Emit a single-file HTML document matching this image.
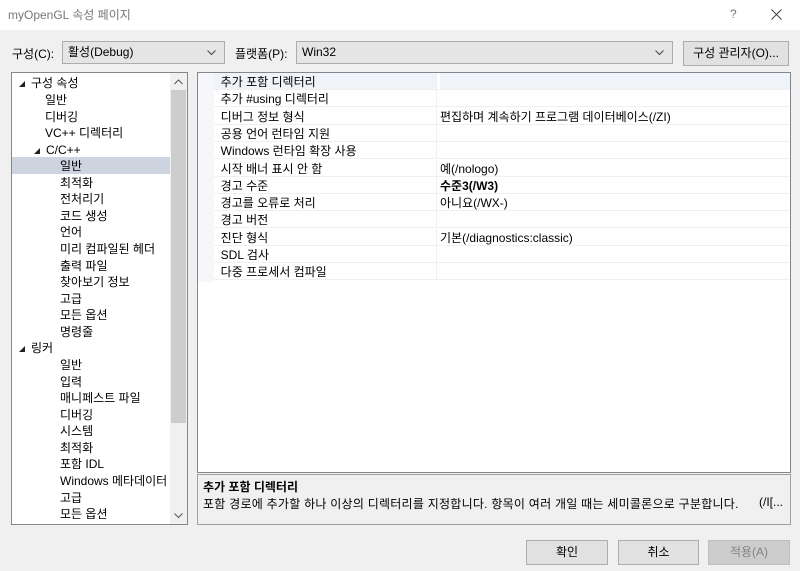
<!DOCTYPE html>
<html><head><meta charset="utf-8"><style>
*{box-sizing:border-box;margin:0;padding:0}
body{width:800px;height:571px;background:#f0f0f0;font-family:"Liberation Sans","Noto Sans CJK KR",sans-serif;font-size:12px;color:#000;position:relative;overflow:hidden}
.a{position:absolute;white-space:nowrap}
.combo{position:absolute;background:#e5e5e5;border:1px solid #adadad;height:23px;line-height:21px;padding-left:5px}
.combo svg{position:absolute;right:8px;top:8px}
.btn{position:absolute;background:#e1e1e1;border:1px solid #adadad;height:25px;line-height:23px;text-align:center}
.tr{position:absolute;left:0;height:17px;line-height:18px;width:158px}
.tri{display:inline-block;width:0;height:0;border-left:6px solid transparent;border-bottom:6px solid #222;margin-right:6px;vertical-align:0}
.gr{position:absolute;left:16px;right:0;height:17px;line-height:19px;border-bottom:1px solid #f0f0f0;overflow:hidden}
.gr span{position:absolute;left:222px;padding-left:3px;border-left:1px solid #f0f0f0;height:17px}
</style></head><body>
<div class="a" style="left:0;top:0;width:800px;height:30px;background:#fff"></div>
<div class="a" style="left:8px;top:6px;font-size:12px;color:#777">myOpenGL 속성 페이지</div>
<div class="a" style="left:730px;top:7px;color:#777">?</div>
<svg class="a" style="left:771px;top:9px" width="11" height="11"><path d="M0.5 0.5L10.5 10.5M10.5 0.5L0.5 10.5" stroke="#444" stroke-width="1"/></svg>

<div class="a" style="left:12px;top:45px">구성(C):</div>
<div class="combo" style="left:62px;top:41px;width:163px">활성(Debug)<svg width="9" height="6"><path d="M0.5 0.5L4.5 4.5L8.5 0.5" stroke="#444" fill="none"/></svg></div>
<div class="a" style="left:235px;top:45px">플랫폼(P):</div>
<div class="combo" style="left:296px;top:41px;width:377px">Win32<svg width="9" height="6"><path d="M0.5 0.5L4.5 4.5L8.5 0.5" stroke="#444" fill="none"/></svg></div>
<div class="btn" style="left:683px;top:41px;width:106px">구성 관리자(O)...</div>

<div class="a" style="left:11px;top:72px;width:177px;height:453px;background:#fff;border:1px solid #828790">
 <div class="a" style="left:158px;top:0;width:17px;height:451px;background:#f0f0f0"></div>
 <div class="a" style="left:159px;top:17px;width:15px;height:333px;background:#cdcdcd"></div>
 <svg class="a" style="left:162px;top:6px" width="9" height="6"><path d="M0.5 5L4.5 1L8.5 5" stroke="#555" fill="none"/></svg>
 <svg class="a" style="left:162px;top:440px" width="9" height="6"><path d="M0.5 0.5L4.5 4.5L8.5 0.5" stroke="#555" fill="none"/></svg>
 <div class="tr" style="top:1px;padding-left:7px"><i class="tri"></i>구성 속성</div>
 <div class="tr" style="top:18px;padding-left:33px">일반</div>
 <div class="tr" style="top:35px;padding-left:33px">디버깅</div>
 <div class="tr" style="top:51px;padding-left:33px">VC++ 디렉터리</div>
 <div class="tr" style="top:68px;padding-left:22px"><i class="tri"></i>C/C++</div>
 <div class="tr" style="top:84px;padding-left:48px;background:#cdd3df">일반</div>
 <div class="tr" style="top:101px;padding-left:48px">최적화</div>
 <div class="tr" style="top:117px;padding-left:48px">전처리기</div>
 <div class="tr" style="top:134px;padding-left:48px">코드 생성</div>
 <div class="tr" style="top:150px;padding-left:48px">언어</div>
 <div class="tr" style="top:167px;padding-left:48px">미리 컴파일된 헤더</div>
 <div class="tr" style="top:184px;padding-left:48px">출력 파일</div>
 <div class="tr" style="top:200px;padding-left:48px">찾아보기 정보</div>
 <div class="tr" style="top:217px;padding-left:48px">고급</div>
 <div class="tr" style="top:233px;padding-left:48px">모든 옵션</div>
 <div class="tr" style="top:250px;padding-left:48px">명령줄</div>
 <div class="tr" style="top:266px;padding-left:7px"><i class="tri"></i>링커</div>
 <div class="tr" style="top:283px;padding-left:48px">일반</div>
 <div class="tr" style="top:300px;padding-left:48px">입력</div>
 <div class="tr" style="top:316px;padding-left:48px">매니페스트 파일</div>
 <div class="tr" style="top:333px;padding-left:48px">디버깅</div>
 <div class="tr" style="top:349px;padding-left:48px">시스템</div>
 <div class="tr" style="top:366px;padding-left:48px">최적화</div>
 <div class="tr" style="top:382px;padding-left:48px">포함 IDL</div>
 <div class="tr" style="top:399px;padding-left:48px">Windows 메타데이터</div>
 <div class="tr" style="top:416px;padding-left:48px">고급</div>
 <div class="tr" style="top:432px;padding-left:48px">모든 옵션</div>
</div>

<div class="a" style="left:197px;top:72px;width:594px;height:401px;background:#fff;border:1px solid #828790">
 <div class="a" style="left:0;top:0;width:16px;height:209px;background:#f5f7fb"></div>
 <div class="gr" style="top:0;background:#f0f4fa">&nbsp;&nbsp;추가 포함 디렉터리<span style="background:#fff"></span></div>
 <div class="gr" style="top:17px">&nbsp;&nbsp;추가 #using 디렉터리<span></span></div>
 <div class="gr" style="top:35px">&nbsp;&nbsp;디버그 정보 형식<span>편집하며 계속하기 프로그램 데이터베이스(/ZI)</span></div>
 <div class="gr" style="top:52px">&nbsp;&nbsp;공용 언어 런타임 지원<span></span></div>
 <div class="gr" style="top:69px">&nbsp;&nbsp;Windows 런타임 확장 사용<span></span></div>
 <div class="gr" style="top:87px">&nbsp;&nbsp;시작 배너 표시 안 함<span>예(/nologo)</span></div>
 <div class="gr" style="top:104px">&nbsp;&nbsp;경고 수준<span style="font-weight:bold">수준3(/W3)</span></div>
 <div class="gr" style="top:121px">&nbsp;&nbsp;경고를 오류로 처리<span>아니요(/WX-)</span></div>
 <div class="gr" style="top:138px">&nbsp;&nbsp;경고 버전<span></span></div>
 <div class="gr" style="top:156px">&nbsp;&nbsp;진단 형식<span>기본(/diagnostics:classic)</span></div>
 <div class="gr" style="top:173px">&nbsp;&nbsp;SDL 검사<span></span></div>
 <div class="gr" style="top:190px">&nbsp;&nbsp;다중 프로세서 컴파일<span></span></div>
</div>

<div class="a" style="left:197px;top:474px;width:594px;height:51px;border:1px solid #a0a0a0;background:#f0f0f0">
 <div class="a" style="left:5px;top:3px;font-weight:bold">추가 포함 디렉터리</div>
 <div class="a" style="left:5px;top:20px;letter-spacing:0.25px">포함 경로에 추가할 하나 이상의 디렉터리를 지정합니다. 항목이 여러 개일 때는 세미콜론으로 구분합니다.</div>
 <div class="a" style="left:561px;top:20px">(/I[...</div>
</div>

<div class="btn" style="left:526px;top:540px;width:82px">확인</div>
<div class="btn" style="left:618px;top:540px;width:81px">취소</div>
<div class="btn" style="left:708px;top:540px;width:82px;background:#ccc;border-color:#bfbfbf;color:#838383">적용(A)</div>
</body></html>
